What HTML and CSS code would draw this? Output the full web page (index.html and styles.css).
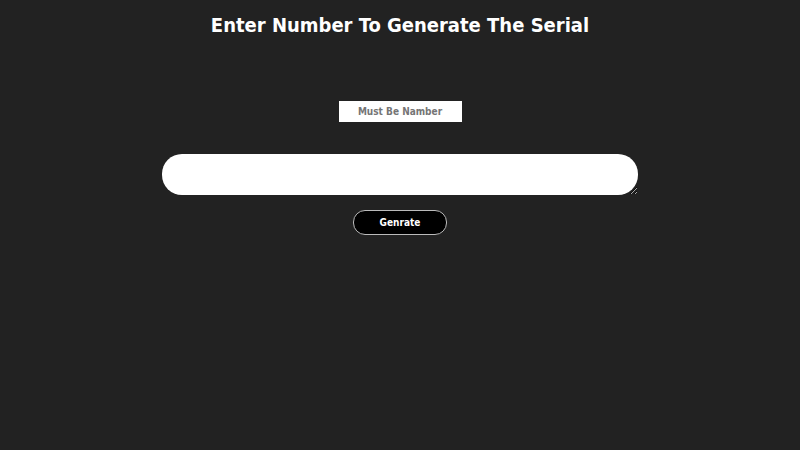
FILE: index.html
```html
<!DOCTYPE html>
<html lang="en">
  <head>
    <meta charset="UTF-8" />
    <meta name="viewport" content="width=device-width, initial-scale=1.0" />
    <title>Serial Generator</title>
    <link rel="stylesheet" href="styles.css">
  </head>
  <body>
    <h1 class="title">Enter Number To Generate The Serial</h1>
    <div class="form">
      <input class="number" type="text" placeholder="Must Be Namber" />
      <textarea class="serial"></textarea>
      <button class="generate">Genrate</button>
    </div>
  </body>
</html>
```

FILE: styles.css
```css
body {
  background-color: #222222;
  color: white;
  font-family: "DejaVu Sans Condensed", "DejaVu Sans", Tahoma, sans-serif;
  margin: 0;
}

.title {
  font-size: 20px;
  text-align: center;
  margin: 0;
  padding-top: 13px;
}

.form {
  display: flex;
  flex-direction: column;
  align-items: center;
  padding-top: 64px;
}

.number {
  width: 123px;
  height: 21px;
  box-sizing: border-box;
  border: none;
  outline: none;
  text-align: center;
  font-family: inherit;
  font-size: 10px;
  font-weight: bold;
  padding: 0;
}
.number::placeholder {
  color: #757575;
}

.serial {
  width: 476px;
  height: 41px;
  box-sizing: border-box;
  margin-top: 32px;
  border: none;
  border-radius: 20px;
  outline: none;
}

.generate {
  width: 94px;
  height: 25px;
  margin-top: 15px;
  background-color: #000;
  color: white;
  border: 1px solid #bbbbbb;
  border-radius: 12px;
  font-family: inherit;
  font-size: 10px;
  font-weight: bold;
}
```
